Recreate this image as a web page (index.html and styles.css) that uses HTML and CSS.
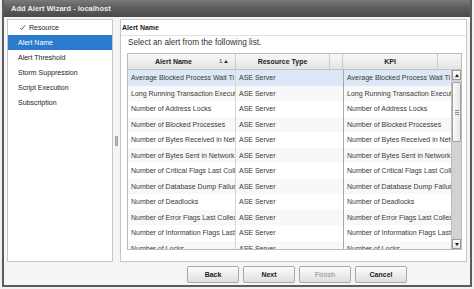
FILE: index.html
```html
<!DOCTYPE html>
<html>
<head>
<meta charset="utf-8">
<title>Add Alert Wizard</title>
<link rel="stylesheet" href="styles.css">
</head>
<body>
<div class="window">
  <div class="titlebar">Add Alert Wizard - localhost</div>
  <div class="content">
    <ul class="steps">
      <li class="step done"><svg class="check" viewBox="0 0 8 8" width="7" height="7"><path d="M1 4.5 L3 6.5 L7 1.5" fill="none" stroke="#555" stroke-width="1.1"/></svg>Resource</li>
      <li class="step active">Alert Name</li>
      <li class="step">Alert Threshold</li>
      <li class="step">Storm Suppression</li>
      <li class="step">Script Execution</li>
      <li class="step">Subscription</li>
    </ul>
    <div class="splitter"><span class="grip"></span></div>
    <section class="page">
      <div class="page-title">Alert Name</div>
      <div class="page-body">
        <p class="prompt">Select an alert from the following list.</p>
        <div class="grid">
          <div class="grid-head">
            <div class="hcell c1"><span class="hlabel">Alert Name</span><span class="sort">1<span class="tri"></span></span></div>
            <div class="hcell c2">Resource Type</div>
            <div class="hcell c3"></div>
            <div class="hcell c4">KPI</div>
            <div class="hcell c5"></div>
          </div>
          <div class="grid-body">
            <div class="rows">
              <div class="row sel"><span class="cell c1">Average Blocked Process Wait Ti</span><span class="cell c2">ASE Server</span></div>
              <div class="row"><span class="cell c1">Long Running Transaction Execut</span><span class="cell c2">ASE Server</span></div>
              <div class="row"><span class="cell c1">Number of Address Locks</span><span class="cell c2">ASE Server</span></div>
              <div class="row"><span class="cell c1">Number of Blocked Processes</span><span class="cell c2">ASE Server</span></div>
              <div class="row"><span class="cell c1">Number of Bytes Received in Netw</span><span class="cell c2">ASE Server</span></div>
              <div class="row"><span class="cell c1">Number of Bytes Sent in Network</span><span class="cell c2">ASE Server</span></div>
              <div class="row"><span class="cell c1">Number of Critical Flags Last Colle</span><span class="cell c2">ASE Server</span></div>
              <div class="row"><span class="cell c1">Number of Database Dump Failure</span><span class="cell c2">ASE Server</span></div>
              <div class="row"><span class="cell c1">Number of Deadlocks</span><span class="cell c2">ASE Server</span></div>
              <div class="row"><span class="cell c1">Number of Error Flags Last Collec</span><span class="cell c2">ASE Server</span></div>
              <div class="row"><span class="cell c1">Number of Information Flags Last</span><span class="cell c2">ASE Server</span></div>
              <div class="row"><span class="cell c1">Number of Locks</span><span class="cell c2">ASE Server</span></div>
            </div>
            <div class="kpi-pane">
              <div class="kpi-rows">
                <div class="krow sel">Average Blocked Process Wait Ti</div>
                <div class="krow">Long Running Transaction Execut</div>
                <div class="krow">Number of Address Locks</div>
                <div class="krow">Number of Blocked Processes</div>
                <div class="krow">Number of Bytes Received in Netw</div>
                <div class="krow">Number of Bytes Sent in Network</div>
                <div class="krow">Number of Critical Flags Last Colle</div>
                <div class="krow">Number of Database Dump Failure</div>
                <div class="krow">Number of Deadlocks</div>
                <div class="krow">Number of Error Flags Last Collec</div>
                <div class="krow">Number of Information Flags Last</div>
                <div class="krow">Number of Locks</div>
              </div>
              <div class="vscroll">
                <span class="arrow up"></span>
                <span class="track"><span class="thumb"><span class="thumb-grip"></span></span></span>
                <span class="arrow down"></span>
              </div>
            </div>
          </div>
        </div>
      </div>
    </section>
  </div>
  <div class="footer">
    <button class="btn">Back</button>
    <button class="btn">Next</button>
    <button class="btn disabled">Finish</button>
    <button class="btn">Cancel</button>
  </div>
</div>
</body>
</html>
```

FILE: styles.css
```css
* { box-sizing: border-box; margin: 0; padding: 0; }
html, body { width: 474px; height: 289px; overflow: hidden; }
body {
  background: #f0f0f0;
  font-family: "Liberation Sans", Arial, sans-serif;
  font-size: 7px;
  color: #2a2a2a;
}
.window {
  margin-left: 2px;
  width: 470px;
  height: 287px;
  border: 2px solid #5c5c5c;
  border-top: 0;
  background: #f5f5f5;
  display: flex;
  flex-direction: column;
  overflow: hidden;
}
.titlebar {
  flex: none;
  height: 17px;
  margin: 0 -2px;
  padding-left: 9px;
  background: linear-gradient(#7a7a7a 0%, #5e5e5e 45%, #4a4a4a 100%);
  color: #ececec;
  font-weight: bold;
  font-size: 7.5px;
  line-height: 17px;
  white-space: nowrap;
}
.content {
  flex: none;
  height: 245px;
  display: flex;
  padding: 2px 3px 0 3px;
}
.steps {
  list-style: none;
  flex: none;
  width: 106px;
  background: #fff;
  border: 1px solid #c6c6c6;
}
.step {
  height: 15px;
  line-height: 15px;
  padding-left: 10px;
  white-space: nowrap;
  color: #222;
}
.step.done { padding-left: 11px; display: flex; align-items: center; }
.check { margin-right: 3px; }
.step.active { background: #2b7bcc; color: #fff; }
.splitter {
  flex: none;
  width: 7px;
  display: flex;
  align-items: center;
  justify-content: center;
}
.grip {
  width: 3px;
  height: 10px;
  background: #bdbdbd;
  border: 1px solid #a4a4a4;
}
.page {
  flex: 1;
  min-width: 0;
  background: #fff;
  border: 1px solid #c6c6c6;
  display: flex;
  flex-direction: column;
  overflow: hidden;
}
.page-title {
  height: 16px;
  line-height: 15px;
  padding-left: 1px;
  border-bottom: 1px solid #e2e2e2;
  font-weight: bold;
  color: #1e1e1e;
}
.page-body { padding: 0 4px 0 6px; }
.prompt {
  height: 14px;
  line-height: 14px;
  margin-bottom: 3px;
  padding-left: 1px;
  font-size: 8.2px;
  color: #333;
  white-space: nowrap;
}
.grid {
  width: 335px;
  height: 197px;
  border: 1px solid #bcbcbc;
  display: flex;
  flex-direction: column;
}
.grid-head {
  flex: none;
  height: 16px;
  display: flex;
  background: linear-gradient(#f8f8f8, #e4e4e4);
  border-bottom: 1px solid #c4c4c4;
}
.hcell {
  flex: none;
  font-weight: bold;
  text-align: center;
  line-height: 15px;
  border-right: 1px solid #cbcbcb;
  color: #222;
  white-space: nowrap;
}
.hcell.c1 { width: 108px; display: flex; }
.hcell.c2 { width: 94px; }
.hcell.c3 { width: 13px; }
.hcell.c4 { width: 95px; }
.hcell.c5 { flex: 1; border-right: 0; }
.hlabel { flex: 1; text-align: center; }
.sort {
  flex: none;
  width: 16px;
  display: flex;
  align-items: center;
  font-weight: normal;
  font-size: 6px;
  color: #333;
}
.tri {
  margin-left: 2px;
  width: 0;
  height: 0;
  border-left: 2px solid transparent;
  border-right: 2px solid transparent;
  border-bottom: 3px solid #333;
}
.grid-body {
  flex: 1;
  min-height: 0;
  display: flex;
  overflow: hidden;
}
.rows {
  flex: none;
  width: 215px;
  overflow: hidden;
}
.row {
  display: flex;
  height: 15.5px;
  line-height: 15.5px;
  white-space: nowrap;
  color: #383838;
}
.row:nth-child(even), .krow:nth-child(even) { background: #f8f8f8; }
.row.sel, .krow.sel { background: #dce8f6; }
.cell { flex: none; overflow: hidden; padding-left: 3px; }
.cell.c1 { width: 108px; border-right: 1px solid #d6d6d6; }
.cell.c2 { width: 94px; }
.kpi-pane {
  flex: 1;
  min-width: 0;
  display: flex;
  border-left: 1px solid #a8a8a8;
  background: #fff;
  overflow: hidden;
}
.kpi-rows { flex: 1; min-width: 0; overflow: hidden; }
.krow {
  height: 15.5px;
  line-height: 15.5px;
  padding-left: 3px;
  white-space: nowrap;
  overflow: hidden;
  color: #383838;
}
.vscroll {
  flex: none;
  width: 10px;
  display: flex;
  flex-direction: column;
  background: #d2d2d2;
  border-left: 1px solid #bdbdbd;
}
.arrow {
  flex: none;
  height: 10px;
  background: linear-gradient(#ffffff, #e4e4e4);
  border: 1px solid #9c9c9c;
  display: flex;
  align-items: center;
  justify-content: center;
}
.arrow::before {
  content: "";
  width: 0;
  height: 0;
  border-left: 2px solid transparent;
  border-right: 2px solid transparent;
  border-bottom: 3px solid #1e1e1e;
}
.arrow.down::before { border-bottom: 0; border-top: 3px solid #1e1e1e; }
.track { flex: 1; padding-top: 2px; }
.thumb {
  display: flex;
  align-items: center;
  justify-content: center;
  height: 60px;
  background: linear-gradient(90deg, #fafafa, #e6e6e6);
  border: 1px solid #a2a2a2;
  border-radius: 2px;
}
.thumb-grip {
  width: 4px;
  height: 5px;
  background: repeating-linear-gradient(#8e8e8e 0 1px, transparent 1px 2px);
}
.footer {
  flex: 1;
  display: flex;
  justify-content: flex-end;
  align-items: flex-start;
  gap: 4px;
  padding: 4px 63px 0 0;
}
.btn {
  width: 52px;
  height: 17px;
  font-family: "Liberation Sans", Arial, sans-serif;
  font-size: 7px;
  font-weight: bold;
  color: #222;
  background: linear-gradient(#fdfdfd, #dedede);
  border: 1px solid #a9a9a9;
  border-radius: 2px;
}
.btn.disabled { color: #a8a8a8; }
```
